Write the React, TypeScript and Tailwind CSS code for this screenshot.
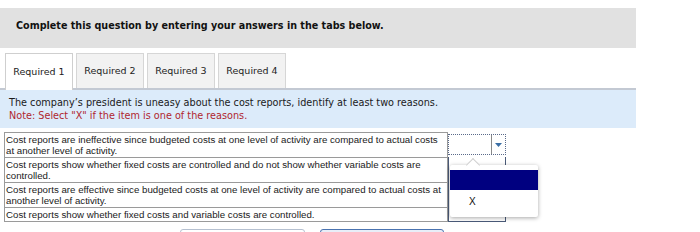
export default function App() {
  const rows = [
    "Cost reports are ineffective since budgeted costs at one level of activity are compared to actual costs at another level of activity.",
    "Cost reports show whether fixed costs are controlled and do not show whether variable costs are controlled.",
    "Cost reports are effective since budgeted costs at one level of activity are compared to actual costs at another level of activity.",
    "Cost reports show whether fixed costs and variable costs are controlled.",
  ];
  const tabs = ["Required 1", "Required 2", "Required 3", "Required 4"];

  return (
    <div className="relative h-[232px] w-[700px] overflow-hidden bg-white" style={{ fontFamily: '"DejaVu Sans", Verdana, sans-serif' }}>
      <div className="mt-2 flex h-[40px] w-[636px] items-center bg-[#e1e1e1] pb-[3px] pl-4 text-[9.6px] font-bold text-[#111]">
        Complete this question by entering your answers in the tabs below.
      </div>

      <div className="mt-[5px] flex w-[636px] items-end gap-[3px] border-b-2 border-[#c3c9d3] pl-[5px]">
        {tabs.map((t, i) => (
          <div
            key={t}
            className={
              i === 0
                ? "-mb-[2px] flex h-[37px] w-[68px] items-center justify-center border border-b-0 border-[#cfcfcf] bg-white text-[9.5px] text-[#222]"
                : "flex h-[35px] w-[68px] items-center justify-center border border-b-0 border-[#d6d6d6] bg-[#f2f2f2] text-[9.5px] text-[#222]"
            }
          >
            {t}
          </div>
        ))}
      </div>

      <div className="flex h-[38px] w-[636px] flex-col justify-center bg-[#dcebfa] pl-[9px] text-[9.7px] leading-[13px]">
        <div className="text-[#1a1a1a]">The company’s president is uneasy about the cost reports, identify at least two reasons.</div>
        <div className="text-[#b0262f]">Note: Select "X" if the item is one of the reasons.</div>
      </div>

      <div className="ml-[4px] mt-[4px] flex" style={{ fontFamily: '"Liberation Sans", Arial, sans-serif' }}>
        <div className="w-[444px] border border-[#9a9a9a]">
          {rows.map((r, i) => (
            <div
              key={i}
              className={`px-[1px] py-[1px] text-[9.7px] leading-[11px] text-[#1a1a1a] ${i < rows.length - 1 ? "border-b border-[#9a9a9a]" : ""}`}
            >
              {r}
            </div>
          ))}
        </div>
        <div className="flex w-[58px] flex-col">
          <div className="mt-[2px] flex h-[21px] border border-dotted border-[#5a6a8a]">
            <div className="flex-1" />
            <div className="flex w-[14px] items-center justify-center border-l border-[#8a8a8a]">
              <svg width="7" height="4" viewBox="0 0 7 4">
                <path d="M0 0 L7 0 L3.5 4 Z" fill="#3a6ea5" />
              </svg>
            </div>
          </div>
          <div className="mt-[2px] flex-1 border border-t-0 border-[#4a5a78] border-t-[#7a8cb0]" />
        </div>
      </div>

      <div className="absolute left-[450px] top-[165px] w-[88px] rounded-[2px] bg-white py-[5px] shadow-[0_1px_4px_rgba(0,0,0,0.35)]">
        <div className="absolute -top-[5px] left-[18px] h-[10px] w-[10px] rotate-45 border-l border-t border-[#d0d0d0] bg-white" />
        <div className="relative h-[20px] bg-[#000080]" />
        <div className="relative flex h-[22px] items-center pl-[19px] text-[10px] text-[#111]" style={{ fontFamily: '"Liberation Sans", Arial, sans-serif' }}>
          X
        </div>
      </div>

      <div className="absolute left-[180px] top-[229px] h-[10px] w-[125px] rounded-[3px] border border-[#b5c0d0] bg-white" />
      <div className="absolute left-[320px] top-[229px] h-[10px] w-[124px] rounded-[3px] border border-[#4a73b0] bg-[#e8eef8]" />
    </div>
  );
}
